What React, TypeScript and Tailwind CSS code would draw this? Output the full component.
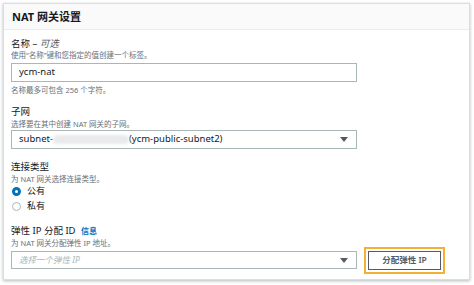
import React from 'react';

const font = { fontFamily: '"Noto Sans", "Noto Sans CJK SC", sans-serif' };

const Caret: React.FC = () => (
    <svg width="8" height="5" viewBox="0 0 8 5" className="shrink-0">
        <path d="M0 0 L8 0 L4 5 Z" fill="#545b64" />
    </svg>
);

const Label: React.FC<{ children: React.ReactNode; className?: string }> = ({ children, className }) => (
    <div className={`h-[12px] text-[9.5px] leading-[12px] text-[#16191f] ${className ?? ''}`}>{children}</div>
);

const Hint: React.FC<{ children: React.ReactNode; className?: string }> = ({ children, className }) => (
    <div className={`h-[10px] text-[7.5px] leading-[10px] text-[#687078] ${className ?? ''}`}>{children}</div>
);

const Radio: React.FC<{ checked?: boolean; label: string }> = ({ checked, label }) => (
    <div className="flex items-center h-[14px] gap-[6px]">
        {checked ? (
            <span className="w-[9px] h-[9px] rounded-full border-[3px] border-[#0073bb] bg-white" />
        ) : (
            <span className="w-[9px] h-[9px] rounded-full border border-[#aab7b8] bg-white" />
        )}
        <span className="text-[9px] leading-[12px] text-[#16191f]">{label}</span>
    </div>
);

const App: React.FC = () => {
    return (
        <div className="w-[474px] h-[285px] bg-white pt-[3px] pl-[3px]" style={font}>
            <div className="w-[467px] h-[277px] border border-[#dcdddd] shadow-[0_1px_3px_rgba(0,28,36,0.3)] bg-white">
                <header className="h-[26px] bg-[#fafafa] border-b border-[#eaeded] flex items-center pl-[8px]">
                    <h2 className="text-[11px] font-bold text-[#16191f] leading-none">NAT 网关设置</h2>
                </header>
                <div className="pl-[7px] pt-[8px]">
                    <Label>
                        名称 – <i className="text-[#545b64]">可选</i>
                    </Label>
                    <Hint>使用“名称”键和您指定的值创建一个标签。</Hint>
                    <div className="mt-[3px] w-[346px] h-[19px] border border-[#aab7b8] flex items-center pl-[7px] text-[9.5px] text-[#16191f]">
                        ycm-nat
                    </div>
                    <Hint className="mt-[3px]">名称最多可包含 256 个字符。</Hint>

                    <Label className="mt-[11px]">子网</Label>
                    <Hint className="mt-[1px]">选择要在其中创建 NAT 网关的子网。</Hint>
                    <div className="mt-[1px] w-[346px] h-[19px] border border-[#aab7b8] flex items-center pl-[7px] pr-[8px] text-[9.5px] text-[#16191f]">
                        <span>subnet-</span>
                        <span className="w-[76px] h-[9px] bg-[#e9eaeb] rounded-sm blur-[1.5px]" />
                        <span>(ycm-public-subnet2)</span>
                        <span className="flex-1" />
                        <Caret />
                    </div>

                    <Label className="mt-[12px]">连接类型</Label>
                    <Hint className="mt-[1px]">为 NAT 网关选择连接类型。</Hint>
                    <div className="pl-[1px]">
                        <Radio checked label="公有" />
                        <div className="mt-[1px]">
                            <Radio label="私有" />
                        </div>
                    </div>

                    <Label className="mt-[12px]">
                        弹性 IP 分配 ID <span className="ml-[3px] text-[8px] font-bold text-[#0073bb]">信息</span>
                    </Label>
                    <Hint className="mt-[1px]">为 NAT 网关分配弹性 IP 地址。</Hint>
                    <div className="-mt-[2px] h-[28px] flex items-center gap-[7px]">
                        <div className="w-[346px] h-[18px] border border-[#aab7b8] flex items-center pl-[7px] pr-[8px] text-[8.5px]">
                            <i className="text-[#aab7b8]">选择一个弹性 IP</i>
                            <span className="flex-1" />
                            <Caret />
                        </div>
                        <div className="border-[2px] border-[#f2b134] p-[2px]">
                            <div className="w-[73px] h-[19px] border border-[#545b64] flex items-center justify-center text-[8.5px] font-semibold text-[#545b64]">
                                分配弹性 IP
                            </div>
                        </div>
                    </div>
                </div>
            </div>
        </div>
    );
};

export default App;
